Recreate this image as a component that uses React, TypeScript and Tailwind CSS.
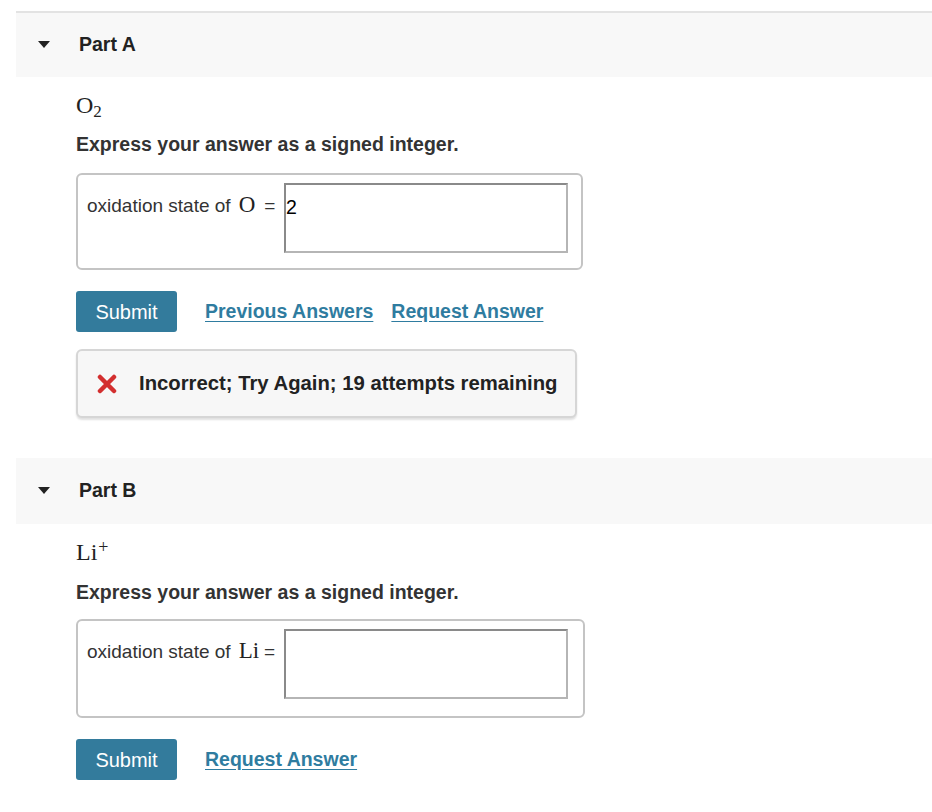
import { useState } from 'react';

function Caret() {
  return (
    <svg width="12" height="8" viewBox="0 0 12 8" className="shrink-0">
      <path d="M0 0 L12 0 L6 7 Z" fill="#222" />
    </svg>
  );
}

function PartHeader({ label, topBorder }: { label: string; topBorder?: boolean }) {
  return (
    <div
      className={`flex items-center h-[66px] bg-[#f8f8f8] pl-[22px] ${
        topBorder ? 'border-t-2 border-[#e3e3e3]' : ''
      }`}
    >
      <Caret />
      <span className="ml-[29px] text-[19.5px] font-bold text-[#222]">{label}</span>
    </div>
  );
}

function AnswerBox({ element, value, wide }: { element: string; value: string; wide?: boolean }) {
  return (
    <div
      className={`${wide ? 'mt-[16px] w-[509px] h-[99px]' : 'mt-[18px] w-[507px] h-[97px]'} border-2 border-[#c4c4c4] rounded-[6px] flex items-start pt-[8px] pl-[9px]`}
    >
      <span className="mt-[10px] text-[19px] leading-[24px] text-[#333] whitespace-nowrap w-[197px] flex items-baseline">
        oxidation state of
        <span className="ml-[8px] font-['Liberation_Serif',serif] text-[23px] text-[#222]">{element}</span>
        <span className={wide ? 'ml-[5px]' : 'ml-[9px]'}>=</span>
      </span>
      <div className="w-[284px] h-[70px] border-2 border-t-[#8a8a8a] border-l-[#8a8a8a] border-r-[#b5b5b5] border-b-[#b5b5b5] bg-white pt-[13px] text-[19.5px] text-black leading-none">
        {value}
      </div>
    </div>
  );
}

function Actions({ showPrevious }: { showPrevious?: boolean }) {
  return (
    <div className="mt-[21px] flex items-center">
      <button className="w-[101px] h-[41px] bg-[#337b9c] rounded-[3px] text-white text-[20px]">Submit</button>
      {showPrevious && (
        <a className="ml-[28px] text-[19.5px] font-bold text-[#2f7ca0] underline underline-offset-[3px] cursor-pointer">
          Previous Answers
        </a>
      )}
      <a
        className={`${showPrevious ? 'ml-[18px]' : 'ml-[28px]'} text-[19.5px] font-bold text-[#2f7ca0] underline underline-offset-[3px] cursor-pointer`}
      >
        Request Answer
      </a>
    </div>
  );
}

export default function App() {
  const [answerA] = useState('2');

  return (
    <div className="w-[932px] min-h-[812px] bg-white pt-[11px] pl-4 font-['Liberation_Sans',Arial,sans-serif] text-[#333]">
      {/* Part A */}
      <PartHeader label="Part A" topBorder />
      <div className="pl-[60px] pt-[16px]">
        <div className="h-[24px] font-['Liberation_Serif',serif] text-[24px] leading-[24px] text-[#222]">
          O<span className="text-[17px] relative top-[4px]">2</span>
        </div>
        <p className="mt-[16px] text-[19.5px] font-bold leading-[22px] text-[#333]">
          Express your answer as a signed integer.
        </p>
        <AnswerBox element="O" value={answerA} />
        <Actions showPrevious />
        <div className="mt-[17px] w-[501px] h-[69px] bg-[#f7f7f7] border-2 border-[#d6d6d6] rounded-[6px] shadow-[0_2px_2px_rgba(0,0,0,0.12)] flex items-center pl-[19px]">
          <svg width="20" height="20" viewBox="0 0 20 20" className="shrink-0">
            <path d="M3 3 L17 17 M17 3 L3 17" stroke="#d32f2f" strokeWidth="4.5" strokeLinecap="round" />
          </svg>
          <span className="ml-[22px] text-[20.3px] font-bold text-[#222]">
            Incorrect; Try Again; 19 attempts remaining
          </span>
        </div>
      </div>

      {/* Part B */}
      <div className="mt-[40px]">
        <PartHeader label="Part B" />
      </div>
      <div className="pl-[60px] pt-[16px]">
        <div className="h-[24px] font-['Liberation_Serif',serif] text-[24px] leading-[24px] text-[#222]">
          Li<span className="text-[18px] relative top-[-7px] ml-[1px]">+</span>
        </div>
        <p className="mt-[17px] text-[19.5px] font-bold leading-[22px] text-[#333]">
          Express your answer as a signed integer.
        </p>
        <AnswerBox element="Li" value="" wide />
        <Actions />
      </div>
    </div>
  );
}
